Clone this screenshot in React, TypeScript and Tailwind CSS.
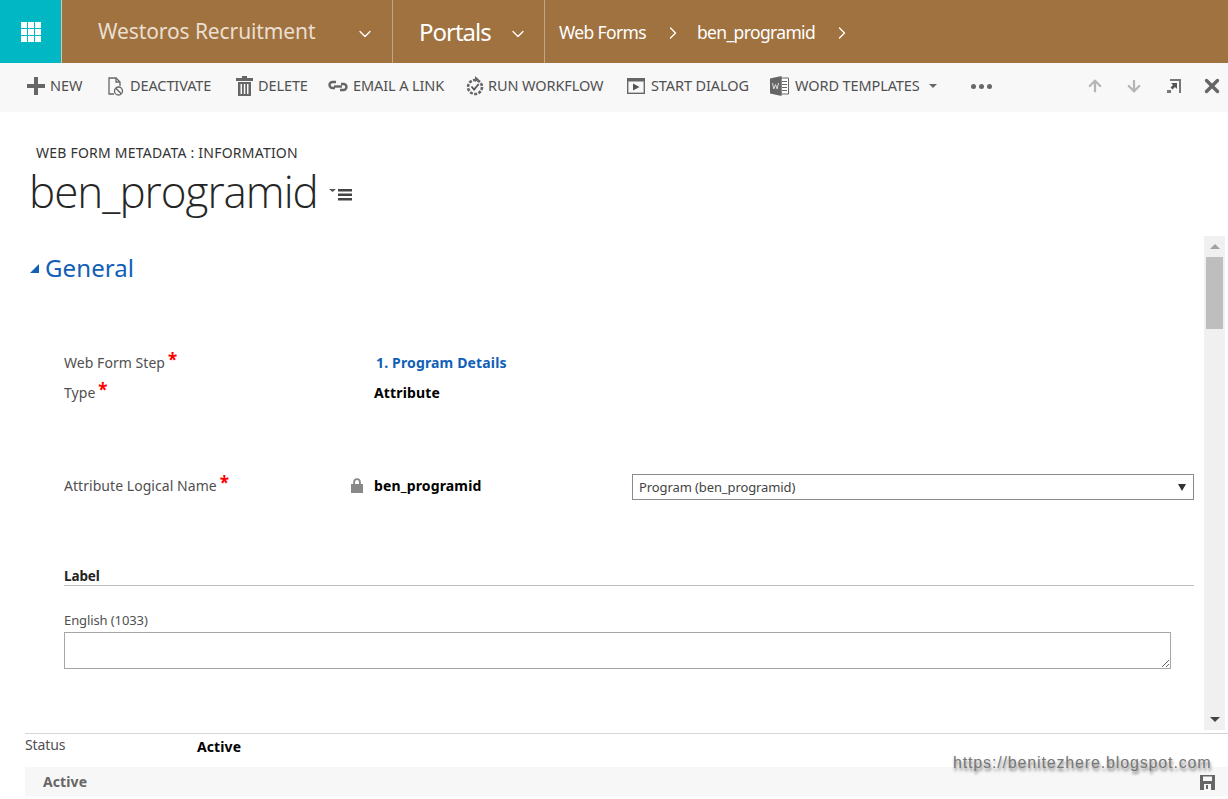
import { ChevronDown, ChevronRight, ArrowUp, ArrowDown, X } from 'lucide-react'

const uiFont = "font-['Noto_Sans','Open_Sans',sans-serif]"

function AppGrid() {
  return (
    <div className="grid grid-cols-3 gap-[1px] w-[20px] h-[20px]">
      {Array.from({ length: 9 }).map((_, i) => (
        <span key={i} className="bg-white w-[6px] h-[6px]" />
      ))}
    </div>
  )
}

function PlusIcon() {
  return (
    <svg width="18" height="18" viewBox="0 0 18 18" fill="#666">
      <path d="M7 0h4v7h7v4h-7v7H7v-7H0V7h7z" />
    </svg>
  )
}

function DeactivateIcon() {
  return (
    <svg width="17" height="21" viewBox="0 0 17 21" fill="none" stroke="#666" strokeWidth="1.3">
      <path d="M7 18H2V2h7l4 4v4" />
      <path d="M9 2v4h4" />
      <circle cx="11.5" cy="15" r="4" />
      <path d="M8.8 12.2l5.4 5.6" />
    </svg>
  )
}

function TrashIcon() {
  return (
    <svg width="19" height="20" viewBox="0 0 19 20" fill="#666">
      <path d="M7 0h5v2h6v3H1V2h6z" />
      <path d="M3 6h13v14H3zM5.5 8v10h1.5V8zM8.8 8v10h1.5V8zM12 8v10h1.5V8z" fillRule="evenodd" />
    </svg>
  )
}

function LinkIcon() {
  return (
    <svg width="20" height="12" viewBox="0 0 20 12" fill="none" stroke="#666" strokeWidth="2.4">
      <path d="M8 2H4.5a3 3 0 0 0 0 6H7" />
      <path d="M12 10h3.5a3 3 0 0 0 0-6H13" />
      <path d="M6 6.5h8" />
    </svg>
  )
}

function WorkflowIcon() {
  return (
    <svg width="18" height="20" viewBox="0 0 18 20" fill="none">
      <circle cx="9" cy="11" r="7" stroke="#666" strokeWidth="2.6" strokeDasharray="3 1.4" />
      <path d="M5.5 10.5l2.6 3 4.6-5.5" stroke="#555" strokeWidth="1.8" />
      <path d="M9 0l4 3.5-4 2.5z" fill="#666" />
    </svg>
  )
}

function DialogIcon() {
  return (
    <svg width="18" height="16" viewBox="0 0 18 16" fill="none">
      <rect x="0.7" y="0.7" width="16.6" height="14.6" stroke="#666" strokeWidth="1.4" />
      <path d="M1 1h16v2.5H1z" fill="#666" />
      <path d="M6 5.5l6.5 3.5L6 12.5z" fill="#555" />
    </svg>
  )
}

function WordIcon() {
  return (
    <svg width="19" height="20" viewBox="0 0 19 20">
      <path d="M11 2h7.5v16H11z" fill="#fff" stroke="#666" strokeWidth="1" />
      <path d="M12 5.5h5M12 8.5h5M12 11.5h5M12 14.5h5" stroke="#666" strokeWidth="1.2" />
      <path d="M0 2.5L11.5 0v20L0 17.5z" fill="#666" />
      <path d="M2.5 7l1.3 6 1.7-4.5L7.2 13l1.3-6" fill="none" stroke="#ddd" strokeWidth="1" />
    </svg>
  )
}

function PopOutIcon() {
  return (
    <svg width="16" height="16" viewBox="0 0 16 16" fill="#777">
      <path d="M4 1h11v14h-2V3H4z" />
      <path d="M5 5h6v6L9 9l-2.5 2.5-2-2L7 7z" fill="#555" />
      <path d="M1 12h4v3H1z" />
    </svg>
  )
}

function LockIcon() {
  return (
    <svg width="12" height="15" viewBox="0 0 12 15" fill="#888">
      <path d="M0 6h12v9H0z" />
      <path d="M2.2 7V4a3.8 3.8 0 0 1 7.6 0v3H8V4a2 2 0 0 0-4 0v3z" />
    </svg>
  )
}

function SaveIcon() {
  return (
    <svg width="15" height="15" viewBox="0 0 15 15" fill="#666">
      <path d="M0 0h15v15H0zM3 1.5V6h9V1.5zM4 9v6h7V9z" fillRule="evenodd" />
      <path d="M6 10h2v4H6z" />
    </svg>
  )
}

function Cmd({ icon, label, className }: { icon: React.ReactNode; label: string; className?: string }) {
  return (
    <div className={`flex items-center ${className ?? ''}`}>
      {icon}
      <span className="text-[14.5px] tracking-[-0.1px] text-[#505050]">{label}</span>
    </div>
  )
}

function Req() {
  return <span className="text-[#f00] text-[17px] font-bold leading-none ml-[3px] -mt-[6px]">*</span>
}

function FieldLabel({ text }: { text: string }) {
  return (
    <div className="flex items-center w-[310px] text-[14px] tracking-[0.05px] text-[#505050]">
      {text}
      <Req />
    </div>
  )
}

export default function App() {
  return (
    <div className={`relative w-[1228px] h-[799px] overflow-hidden bg-white ${uiFont}`}>
      <header className="flex h-[63px] bg-[#a0723f] text-white">
        <div className="flex items-center justify-center w-[62px] bg-[#00b7c3] border-r border-[#d9c4a8]">
          <AppGrid />
        </div>
        <div className="flex items-center w-[331px] border-r border-[#c3a681] pl-[36px]">
          <span className="text-[21px] tracking-[-0.1px] text-[#eadfd0] w-[259px]">Westoros Recruitment</span>
          <ChevronDown className="w-[20px] h-[20px] mt-[5px] -ml-[2px]" strokeWidth={1.6} />
        </div>
        <div className="flex items-center w-[152px] border-r border-[#c3a681] pl-[26px]">
          <span className="text-[24px] tracking-[-1px] w-[91px]">Portals</span>
          <ChevronDown className="w-[20px] h-[20px] mt-[5px] -ml-[2px]" strokeWidth={1.6} />
        </div>
        <div className="flex items-center pl-[14px] pt-[2px] text-[17.5px] tracking-[-0.65px]">
          <span className="w-[105px]">Web Forms</span>
          <ChevronRight className="w-[20px] h-[20px] mt-[1px] -ml-[1px]" strokeWidth={1.6} />
          <span className="ml-[14px] w-[130px]">ben_programid</span>
          <ChevronRight className="w-[20px] h-[20px] mt-[1px] ml-[5px]" strokeWidth={1.6} />
        </div>
      </header>

      <div className="flex items-center h-[49px] bg-[#f8f8f8] pl-[27px] pr-[5px] pb-[3px]">
        <Cmd icon={<PlusIcon />} label="NEW" className="w-[80px] gap-[5px]" />
        <Cmd icon={<DeactivateIcon />} label="DEACTIVATE" className="w-[128px] gap-[6px]" />
        <Cmd icon={<TrashIcon />} label="DELETE" className="w-[93px] gap-[4px]" />
        <Cmd icon={<LinkIcon />} label="EMAIL A LINK" className="w-[138px] gap-[5px]" />
        <Cmd icon={<WorkflowIcon />} label="RUN WORKFLOW" className="w-[161px] gap-[4px]" />
        <Cmd icon={<DialogIcon />} label="START DIALOG" className="w-[143px] gap-[6px]" />
        <Cmd icon={<WordIcon />} label="WORD TEMPLATES" className="w-[160px] gap-[6px]" />
        <span className="w-0 h-0 -ml-[1px] border-x-[4px] border-x-transparent border-t-[4px] border-t-[#666]" />
        <div className="flex gap-[3px] ml-[34px]">
          <span className="w-[5px] h-[5px] rounded-full bg-[#666]" />
          <span className="w-[5px] h-[5px] rounded-full bg-[#666]" />
          <span className="w-[5px] h-[5px] rounded-full bg-[#666]" />
        </div>
        <div className="flex items-center ml-auto">
          <ArrowUp className="w-[18px] h-[18px] text-[#b5b5b5]" strokeWidth={3} />
          <ArrowDown className="w-[18px] h-[18px] ml-[21px] text-[#b5b5b5]" strokeWidth={3} />
          <span className="ml-[23px]"><PopOutIcon /></span>
          <X className="w-[22px] h-[22px] ml-[19px] text-[#666]" strokeWidth={3.6} />
        </div>
      </div>

      <div className="h-[124px] pt-[31px] pl-[30px]">
        <div className="pl-[6px] text-[14px] leading-[19px] tracking-[0.23px] text-[#333]">WEB FORM METADATA : INFORMATION</div>
        <div className="flex items-center h-[58px] -ml-[1px] font-['Open_Sans',sans-serif]">
          <span className="text-[44px] leading-[58px] font-light tracking-[-1px] text-[#262626]">ben_programid</span>
          <svg className="ml-[11px] mt-[6px]" width="24" height="16" viewBox="0 0 24 16">
            <path d="M0 3h7L3.5 6z" fill="#555" />
            <path d="M9 3h14v2.4H9zM9 7.5h14v2.4H9zM9 12h14v2.4H9z" fill="#444" />
          </svg>
        </div>
      </div>

      <div className="flex h-[497px]">
        <div className="w-[1204px] pl-[30px]">
          <div className="flex items-center h-[40px] pt-[12px] box-content">
            <span className="w-0 h-0 border-l-[9px] border-l-transparent border-b-[9px] border-b-[#1160b7]" />
            <span className="ml-[6px] text-[24px] tracking-[0.1px] text-[#1160b7]">General</span>
          </div>

          <div className="pl-[34px] pt-[59px] w-[1164px]">
            <div className="flex items-center h-[30px]">
              <FieldLabel text="Web Form Step" />
              <span className="ml-[2px] text-[14px] font-bold tracking-[0.15px] text-[#1160b7]">1. Program Details</span>
            </div>
            <div className="flex items-center h-[30px]">
              <FieldLabel text="Type" />
              <span className="text-[14px] font-bold tracking-[0.15px] text-black">Attribute</span>
            </div>
            <div className="flex items-center h-[26px] mt-[67px]">
              <div className="w-[287px] flex items-center -mt-[4px] text-[14px] tracking-[0.05px] text-[#505050]">
                Attribute Logical Name
                <Req />
              </div>
              <span className="-mt-[4px]"><LockIcon /></span>
              <span className="ml-[11px] -mt-[4px] w-[258px] text-[14px] font-bold tracking-[0.15px] text-black">ben_programid</span>
              <div className="flex items-center justify-between w-[562px] h-[26px] border border-[#8a8a8a] pl-[6px] pr-[6px] pt-[1px] text-[13px] tracking-[-0.1px] text-[#444]">
                Program (ben_programid)
                <span className="w-0 h-0 mr-[1px] border-x-[4px] border-x-transparent border-t-[7px] border-t-[#333]" />
              </div>
            </div>

            <div className="mt-[66px] h-[20px] border-b border-[#bdbdbd] text-[13.5px] leading-[20px] font-bold tracking-[-0.1px] text-[#222]">Label</div>
            <div className="mt-[24px] text-[13px] leading-[20px] tracking-[-0.1px] text-[#505050]">English (1033)</div>
            <textarea className="block mt-[2px] w-[1107px] h-[37px] border border-[#a6a6a6] bg-white outline-none" />
          </div>
        </div>

        <div className="flex flex-col items-center w-[21px] h-[494px] bg-[#f0f0f0]">
          <div className="flex items-center justify-center h-[21px]">
            <span className="w-0 h-0 border-x-[5px] border-x-transparent border-b-[5px] border-b-[#a0a0a0]" />
          </div>
          <div className="w-[17px] h-[72px] bg-[#bebebe]" />
          <div className="mt-auto flex items-center justify-center h-[21px]">
            <span className="w-0 h-0 border-x-[5px] border-x-transparent border-t-[5px] border-t-[#444]" />
          </div>
        </div>
      </div>

      <div className="ml-[25px] border-t border-[#d6d6d6]">
        <div className="flex h-[33px]">
          <span className="w-[172px] text-[14px] tracking-[-0.1px] text-[#505050]">Status</span>
          <span className="pt-[2px] text-[14px] font-bold tracking-[0.1px] text-black">Active</span>
        </div>
        <div className="flex items-center justify-between h-[29px] bg-[#f7f7f7] pl-[18px] pr-[13px]">
          <span className="text-[14px] font-bold tracking-[0.1px] text-[#666]">Active</span>
          <span className="mt-[2px]"><SaveIcon /></span>
        </div>
      </div>

      <span className="absolute left-[953px] top-[753px] font-['Liberation_Sans',sans-serif] text-[16px] leading-[20px] tracking-[0.85px] text-[#777] [text-shadow:1px_3px_3px_rgba(0,0,0,0.5)]">
        https://benitezhere.blogspot.com
      </span>
    </div>
  )
}
